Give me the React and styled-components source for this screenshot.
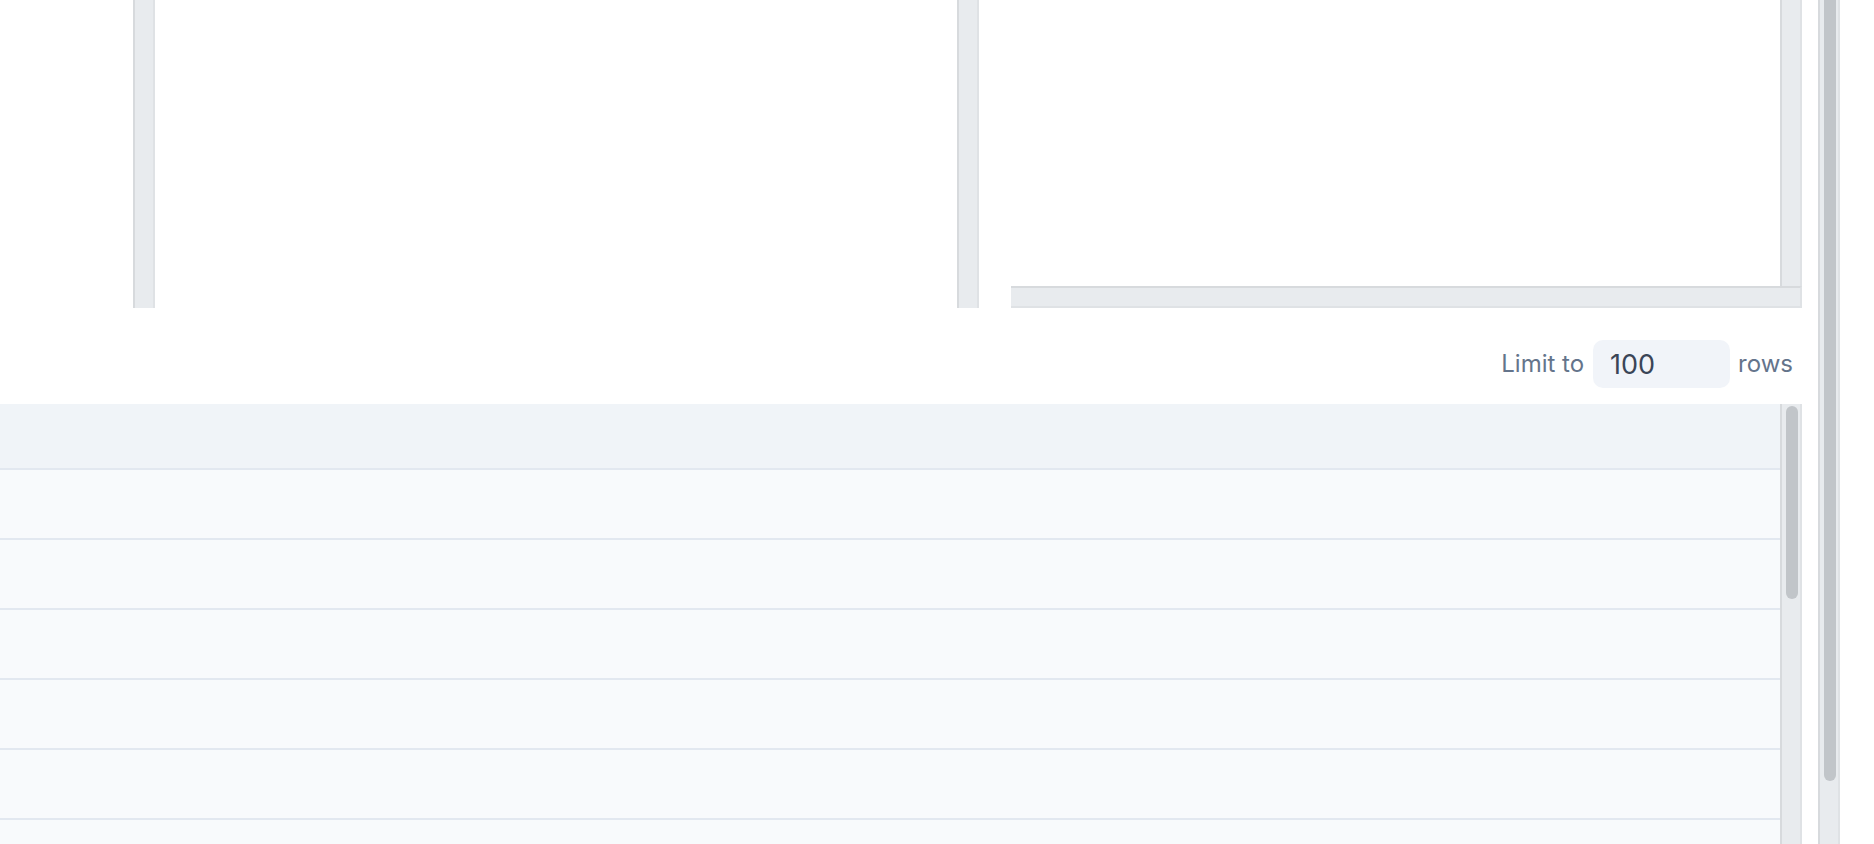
import React from "react";
import styled, { createGlobalStyle } from "styled-components";

const Global = createGlobalStyle`
  html, body { margin: 0; padding: 0; background: #ffffff; overflow: hidden; }
  body { font-family: Inter, "Noto Sans", "Liberation Sans", sans-serif; }
  #root { height: 844px; }
`;

const Page = styled.div`
  display: flex;
  height: 844px;
  width: 1874px;
  overflow: hidden;
`;

const Content = styled.div`
  display: flex;
  flex-direction: column;
  width: 1802px;
  flex: none;
`;

const PageGap = styled.div`
  width: 16px;
  flex: none;
`;

const Track = styled.div`
  position: relative;
  flex: none;
  box-sizing: border-box;
  background: #e8ebee;
  ${(p) =>
    p.$horizontal
      ? `height: 22px; border-top: 2px solid #d7dadd; border-bottom: 2px solid #dfe2e5; border-right: 2px solid #dfe2e5;`
      : `width: 22px; border-left: 2px solid #d7dadd; border-right: 2px solid #dfe2e5;`}
`;

const Thumb = styled.div`
  position: absolute;
  left: 4px;
  width: 12px;
  background: #c1c5c9;
  border-radius: 6px;
`;

const TopRow = styled.div`
  display: flex;
  height: 308px;
  flex: none;
`;

const Pane = styled.div`
  display: flex;
  flex: none;
  width: ${(p) => p.$w}px;
  margin-right: ${(p) => p.$mr || 0}px;
`;

const PaneBody = styled.div`
  flex: 1;
  background: #ffffff;
`;

const RightPane = styled.div`
  flex: 1;
  display: grid;
  grid-template-columns: 1fr 22px;
  grid-template-rows: 1fr 22px;
`;

const HTrack = styled(Track)`
  grid-column: 1 / 3;
`;

const Controls = styled.div`
  display: flex;
  justify-content: flex-end;
  align-items: center;
  gap: 8px;
  padding: 32px 9px 16px 0;
  flex: none;
`;

const Label = styled.span`
  font-size: 24px;
  color: #64748b;
  line-height: 48px;
`;

const LimitInput = styled.input`
  box-sizing: border-box;
  width: 137px;
  height: 48px;
  border: none;
  outline: none;
  border-radius: 10px;
  background: #f1f4f9;
  padding: 0 16px 0 17px;
  font-family: Inter, "Noto Sans", sans-serif;
  font-size: 27px;
  color: #3a4557;
  margin-left: 1px;
`;

const TableWrap = styled.div`
  display: flex;
  flex: 1;
  min-height: 0;
`;

const Table = styled.div`
  flex: 1;
  display: flex;
  flex-direction: column;
`;

const HeaderRow = styled.div`
  height: 64px;
  flex: none;
  background: #f0f4f8;
  border-bottom: 2px solid #e2e8f0;
`;

const Row = styled.div`
  height: 68px;
  flex: none;
  background: #f8fafc;
  border-bottom: 2px solid #e2e8f0;
`;

export default function App() {
  const rows = Array.from({ length: 6 });
  return (
    <>
      <Global />
      <Page>
        <Content>
          <TopRow>
            <Pane $w={155}>
              <PaneBody />
              <Track />
            </Pane>
            <Pane $w={824} $mr={32}>
              <PaneBody />
              <Track />
            </Pane>
            <RightPane>
              <PaneBody />
              <Track />
              <HTrack $horizontal />
            </RightPane>
          </TopRow>
          <Controls>
            <Label>Limit to</Label>
            <LimitInput defaultValue="100" />
            <Label>rows</Label>
          </Controls>
          <TableWrap>
            <Table>
              <HeaderRow />
              {rows.map((_, i) => (
                <Row key={i} />
              ))}
            </Table>
            <Track>
              <Thumb style={{ top: 2, height: 193 }} />
            </Track>
          </TableWrap>
        </Content>
        <PageGap />
        <Track>
          <Thumb style={{ top: -20, height: 801 }} />
        </Track>
      </Page>
    </>
  );
}
